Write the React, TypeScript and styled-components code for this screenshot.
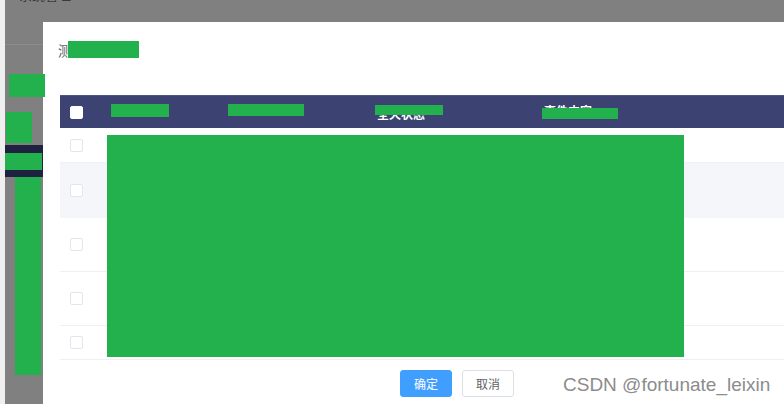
import styled, { createGlobalStyle } from 'styled-components'

const GlobalStyle = createGlobalStyle`
  html, body {
    margin: 0;
    padding: 0;
    background: #efefef;
    font-family: "Liberation Sans", "Noto Sans CJK SC", sans-serif;
  }
`

const PAINT = '#22b14c'

const headCols = [
  { width: 117, block: 58, top: 9, h: 13, text: '', shift: 0 },
  { width: 147, block: 76, top: 9, h: 12, text: '', shift: 0 },
  { width: 167, block: 68, top: 10, h: 10, text: '全天状态', shift: 2 },
  { width: 253, block: 76, top: 13, h: 11, text: '事件内容', shift: -4 },
]

const rows = [35, 55, 54, 54, 34]

export default function App() {
  return (
    <>
      <GlobalStyle />
      <Screen>
        <Edge />
        <Stage>
          <MaskedPage>
            <PageTitle>系统管理</PageTitle>
            <PageRule />
            <Blot w={36} h={23} x={4} y={29} />
            <Blot w={26} h={31} x={1} y={15} />
            <NavStrip>
              <Blot w={38} h={17} x={-1} y={0} />
            </NavStrip>
            <Blot w={26} h={198} x={10} y={0} />
          </MaskedPage>

          <Modal>
            <TitleRow>
              <TitleGlyph>测</TitleGlyph>
              <Blot w={71} h={17} x={-4} y={0} />
            </TitleRow>

            <Table>
              <HeadRow>
                <CheckCell>
                  <Check head />
                </CheckCell>
                {headCols.map((c, i) => (
                  <HeadCell key={i} style={{ width: c.width }}>
                    {c.text && <HeadText shift={c.shift}>{c.text}</HeadText>}
                    <HeadBlot w={c.block} dy={c.top} h={c.h} />
                  </HeadCell>
                ))}
              </HeadRow>
              <Body>
                {rows.map((h, i) => (
                  <BodyRow key={i} h={h} striped={i === 1}>
                    <CheckCell>
                      <Check />
                    </CheckCell>
                  </BodyRow>
                ))}
                <BodyCover />
              </Body>
            </Table>

            <Footer>
              <Button primary>确定</Button>
              <Button>取消</Button>
            </Footer>
            <Watermark>CSDN @fortunate_leixin</Watermark>
          </Modal>
        </Stage>
      </Screen>
    </>
  )
}

const Screen = styled.div`
  display: flex;
  width: 784px;
  height: 404px;
  overflow: hidden;
`

const Edge = styled.div`
  width: 5px;
  flex-shrink: 0;
  background: #efefef;
`

const Stage = styled.div`
  position: relative;
  flex: 1;
  background: #808080;
  overflow: hidden;
`

const MaskedPage = styled.div`
  width: 38px;
  display: flex;
  flex-direction: column;
`

const PageTitle = styled.div`
  margin-top: -11px;
  padding-left: 14px;
  font-size: 13px;
  line-height: 14px;
  color: #3a3a3a;
  white-space: nowrap;
`

const PageRule = styled.div`
  margin-top: 41px;
  height: 1px;
  background: #8c8c8c;
`

const NavStrip = styled.div`
  margin-top: 2px;
  height: 32px;
  background: #1f2140;
  padding-top: 8px;
  box-sizing: border-box;
`

const Blot = styled.div<{ w: number; h: number; x: number; y: number }>`
  width: ${p => p.w}px;
  height: ${p => p.h}px;
  margin-left: ${p => p.x}px;
  margin-top: ${p => p.y}px;
  background: ${PAINT};
  flex-shrink: 0;
  position: relative;
  z-index: 2;
`

const Modal = styled.div`
  position: absolute;
  left: 38px;
  top: 22px;
  right: -20px;
  bottom: -20px;
  background: #fff;
  padding: 19px 0 0 17px;
`

const TitleRow = styled.div`
  display: flex;
  align-items: center;
  height: 17px;
  margin-left: -2px;
`

const TitleGlyph = styled.span`
  font-family: "Noto Sans CJK SC", sans-serif;
  font-size: 14px;
  color: #606266;
`

const Table = styled.div`
  margin-top: 37px;
`

const HeadRow = styled.div`
  display: flex;
  align-items: center;
  height: 33px;
  background: #3c4373;
  border-top: 1px solid #4e5486;
  box-sizing: border-box;
`

const CheckCell = styled.div`
  width: 40px;
  flex-shrink: 0;
  padding-left: 10px;
  box-sizing: border-box;
  display: flex;
  align-items: center;
`

const Check = styled.span<{ head?: boolean }>`
  width: 13px;
  height: 13px;
  box-sizing: border-box;
  border-radius: 2px;
  background: #fff;
  border: 1px solid ${p => (p.head ? '#fff' : '#e4e6ec')};
`

const HeadCell = styled.div`
  position: relative;
  flex-shrink: 0;
  padding-left: 11px;
  box-sizing: border-box;
  height: 100%;
  display: flex;
  align-items: center;
`

const HeadText = styled.span<{ shift: number }>`
  color: #fff;
  font-family: "Noto Sans CJK SC", sans-serif;
  font-size: 12px;
  font-weight: bold;
  margin-left: 2px;
  margin-top: ${p => p.shift}px;
`

const HeadBlot = styled.div<{ w: number; dy: number; h: number }>`
  position: absolute;
  left: 11px;
  top: ${p => p.dy - 1}px;
  width: ${p => p.w}px;
  height: ${p => p.h}px;
  background: ${PAINT};
`

const Body = styled.div`
  position: relative;
`

const BodyRow = styled.div<{ h: number; striped?: boolean }>`
  display: flex;
  align-items: center;
  height: ${p => p.h}px;
  box-sizing: border-box;
  background: ${p => (p.striped ? '#f5f6fa' : '#fff')};
  border-bottom: 1px solid ${p => (p.striped ? '#f5f6fa' : '#eef0f5')};
`

const BodyCover = styled.div`
  position: absolute;
  left: 47px;
  top: 7px;
  width: 577px;
  height: 222px;
  background: ${PAINT};
`

const Footer = styled.div`
  display: flex;
  gap: 10px;
  margin-top: 10px;
  padding-left: 340px;
`

const Button = styled.button<{ primary?: boolean }>`
  width: 52px;
  height: 27px;
  border-radius: 3px;
  font-family: "Noto Sans CJK SC", sans-serif;
  font-size: 12px;
  padding: 0;
  border: 1px solid ${p => (p.primary ? '#409eff' : '#dcdfe6')};
  background: ${p => (p.primary ? '#409eff' : '#fff')};
  color: ${p => (p.primary ? '#fff' : '#606266')};
`

const Watermark = styled.div`
  position: absolute;
  left: 520px;
  top: 352px;
  font-family: "Liberation Sans", sans-serif;
  font-size: 19px;
  color: #8c8c8c;
  white-space: nowrap;
`
